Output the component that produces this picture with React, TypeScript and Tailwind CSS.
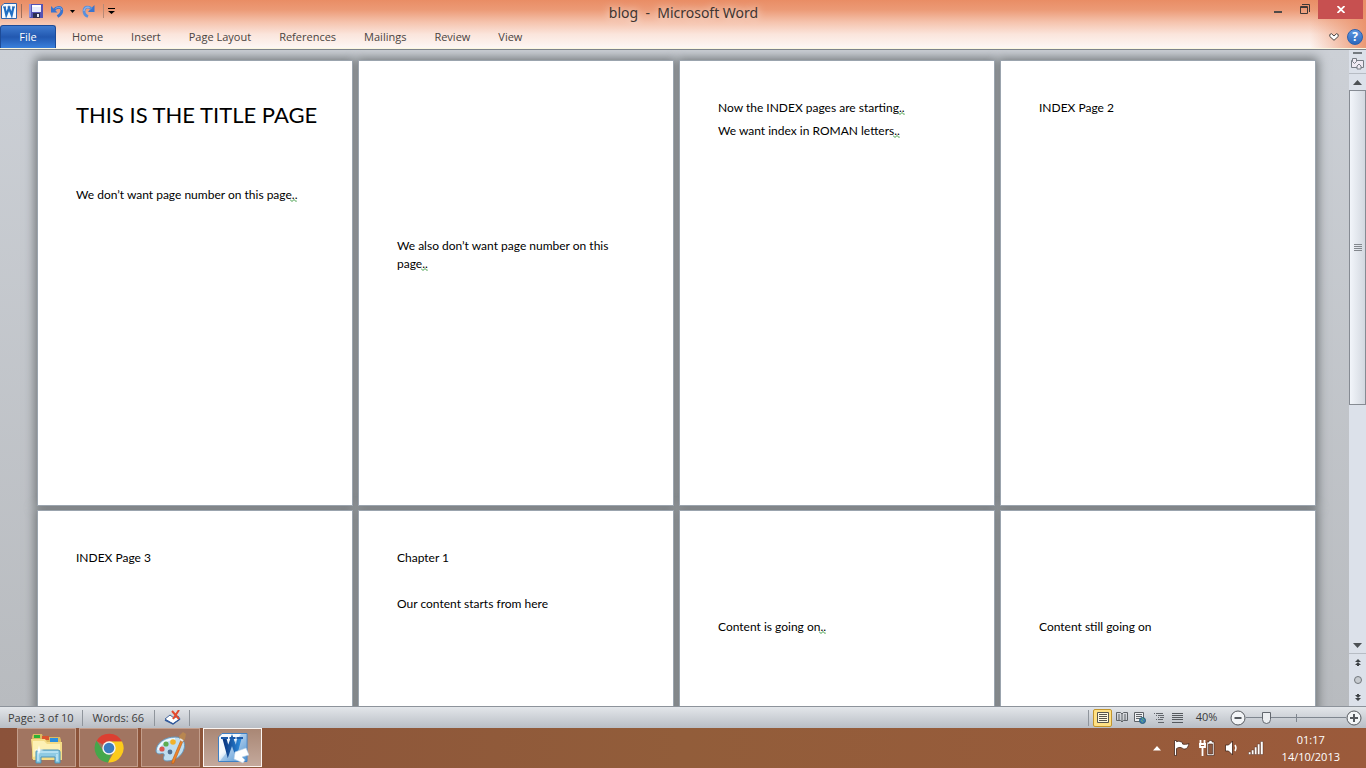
import React from "react";

const tabs = ["Home", "Insert", "Page Layout", "References", "Mailings", "Review", "View"];

type Line = { text: string; gap: string; wavy?: boolean; title?: boolean };

// Thumbnails of the document, four to a row
const pages: Line[][] = [
  [
    { text: "THIS IS THE TITLE PAGE", gap: "mt-[38px]", title: true },
    { text: "We don’t want page number on this page..", gap: "mt-[55px]", wavy: true },
  ],
  [{ text: "We also don’t want page number on this page..", gap: "mt-[176px]", wavy: true }],
  [
    { text: "Now the INDEX pages are starting..", gap: "mt-[38px]", wavy: true },
    { text: "We want index in ROMAN letters..", gap: "mt-[5px]", wavy: true },
  ],
  [{ text: "INDEX Page 2", gap: "mt-[38px]" }],
  [{ text: "INDEX Page 3", gap: "mt-[38px]" }],
  [
    { text: "Chapter 1", gap: "mt-[38px]" },
    { text: "Our content starts from here", gap: "mt-[28px]" },
  ],
  [{ text: "Content is going on..", gap: "mt-[107px]", wavy: true }],
  [{ text: "Content still going on", gap: "mt-[107px]" }],
];

function WordBadge() {
  return (
    <svg width="16" height="16" viewBox="0 0 16 16" aria-hidden="true">
      <path d="M3 .5h12.500v15H.5V3z" fill="#f4f9fe" stroke="#2d64ad" />
      <path d="M3.500 4l1.800 8L8 5l2.700 7 1.800-8" fill="none" stroke="#1f6fc4" strokeWidth="2.200" />
      <path d="M2 4h3M6.500 4h3M11 4h3" stroke="#1a5cab" />
    </svg>
  );
}

function SaveIcon() {
  return (
    <svg width="14" height="14" viewBox="0 0 14 14" aria-hidden="true">
      <path d="M0 0h14v14H1l-1-1z" fill="#5453b4" />
      <path d="M0 0h2v13H0z" fill="#8c91dc" />
      <path d="M3 1h9v7H3z" fill="#e9edfb" />
      <path d="M3 1h9v2H3z" fill="#fff" />
      <path d="M4 9h7v5H4z" fill="#2d2f52" />
      <path d="M8 10h2v3H8z" fill="#e5e7f1" />
    </svg>
  );
}

function UndoIcon() {
  return (
    <svg width="13" height="13" viewBox="0 0 13 13" aria-hidden="true">
      <path d="M0 1v6.500h6.500L4.500 5.500z" fill="#3a74cf" />
      <path d="M3 5C5 2 10.800.8 10.800 5.500c0 2.500-1.800 4.500-4.300 6" fill="none" stroke="#3a74cf" strokeWidth="2.800" />
      <path d="M4.500 3.500C7 1.800 10.500 1.800 10.800 5" fill="none" stroke="#86aee9" />
    </svg>
  );
}

function RedoIcon() {
  return (
    <svg width="13" height="13" viewBox="0 0 13 13" aria-hidden="true">
      <path d="M12.500 0v7H6l2-2.500z" fill="#3a74cf" />
      <path d="M9.500 4C7 1 2 1.500 2 6c0 2.500 1.300 4.500 4 5.500" fill="none" stroke="#5a90dc" strokeWidth="2.800" />
      <path d="M7.500 2.500C4.500 1.500 2 3 2 6" fill="none" stroke="#a5c4ef" />
    </svg>
  );
}

function FolderIcon() {
  return (
    <svg width="34" height="32" viewBox="0 0 34 32" aria-hidden="true">
      <path d="M2 5l1-3h9l1 3h17l1 3v19H2z" fill="#d9ba62" />
      <path d="M4 3h6v3H4z" fill="#2db335" />
      <path d="M12 4h7v4h-7z" fill="#d8552f" />
      <path d="M20 6h8v4h-8z" fill="#2c8fdc" />
      <path d="M1 7h14l2 3h15v18H3z" fill="#f5dc87" />
      <path d="M3 9h11l3 3h13v6L3 25z" fill="#fdf0b4" />
      <path d="M6 31V20q0-2 2-2h20q2 0 2 2v11h-5v-6H11v6z" fill="#8ecae3" stroke="#4a93b7" />
      <path d="M8 20h20M8 20v9M27 22v7" stroke="#d9f5ff" fill="none" />
      <path d="M9 13l.8 4.200 4.200.8-4.200.8L9 23l-.8-4.200L4 18l4.200-.8z" fill="#fff" />
    </svg>
  );
}

function ChromeIcon() {
  return (
    <svg width="30" height="30" viewBox="0 0 30 30" aria-hidden="true">
      <path d="M15 15L2.500 8A14.500 14.500 0 0 1 28 8.500H15z" fill="#dc3f31" />
      <path d="M15 8.500h13A14.500 14.500 0 0 1 14 29.500l6.500-11.200z" fill="#fccb1b" />
      <path d="M2.500 7.800l7 10.500q2 3.500 7.500 3l-3 8.200A14.500 14.500 0 0 1 2.500 7.800z" fill="#45a74a" />
      <circle cx="15" cy="15" r="6.700" fill="#f6f6f2" />
      <circle cx="15" cy="15" r="5.300" fill="#3b7cbf" />
    </svg>
  );
}

function PaintIcon() {
  return (
    <svg width="32" height="32" viewBox="0 0 32 32" aria-hidden="true">
      <path d="M1 19C1 11 10 5 20 5c8 0 11 6 9 12-2 7-9 12-17 12-4 0-4-3-3-5 1-3-2-3-4-2-2 0-4-1-4-3z" fill="#bfdef0" stroke="#6795b8" />
      <path d="M3 18C5 11 12 7 20 7" stroke="#edf9ff" fill="none" strokeWidth="2" />
      <circle cx="7" cy="17" r="2.600" fill="#db5750" />
      <circle cx="11" cy="12" r="2.600" fill="#5cad52" />
      <circle cx="18" cy="10" r="2.800" fill="#f2b229" />
      <circle cx="15" cy="20" r="2.400" fill="#4f6e91" />
      <path d="M26 8l2 1-9 22-2 1v-3z" fill="#ef8429" stroke="#b45d19" strokeWidth=".6" />
      <path d="M24 4l4-4 3 2-1 5-3 3-2-2z" fill="#b88650" />
      <path d="M25 7l3 2" stroke="#e8e8e8" strokeWidth="2" />
    </svg>
  );
}

function WordIcon() {
  return (
    <svg width="32" height="32" viewBox="0 0 32 32" aria-hidden="true">
      <defs>
        <linearGradient id="sheet" x1="0" y1="0" x2="1" y2="1">
          <stop offset="0.400" stopColor="#f5f9fd" />
          <stop offset="1" stopColor="#4f97d6" />
        </linearGradient>
        <linearGradient id="letter" x1="0" y1="0" x2="1" y2="0">
          <stop offset="0" stopColor="#0b3a85" />
          <stop offset="1" stopColor="#2a85d6" />
        </linearGradient>
      </defs>
      <path d="M5 1.500h25v28H1.500V5z" fill="url(#sheet)" stroke="#3e80c4" />
      <path d="M24 2h5.500v27H3z" fill="#3f86cd" opacity=".35" />
      <path d="M7.500 6.500L11 19.500 15 8l4 11.500L22.500 6.500" fill="none" stroke="url(#letter)" strokeWidth="4" />
      <path d="M4 6h7M12.500 6h6M19.500 6H26" stroke="#1a5aab" strokeWidth="2" />
      <path d="M18 20l11-4 3 7-7 2 3 3-2 3-9-4z" fill="#fff" stroke="#b6cde4" strokeWidth=".6" />
    </svg>
  );
}

const tasks = [
  { name: "File Explorer", icon: <FolderIcon /> },
  { name: "Google Chrome", icon: <ChromeIcon /> },
  { name: "Paint", icon: <PaintIcon /> },
  { name: "blog - Microsoft Word", icon: <WordIcon />, active: true },
];

function TitleBar() {
  return (
    <div className="flex h-[25px] items-start justify-between">
      <div className="flex flex-1 items-center gap-1 pl-[1px] pt-[3px]">
        <WordBadge />
        <span className="h-[14px] w-px bg-[#a06f5a]" />
        <button aria-label="Save" className="ml-[3px]"><SaveIcon /></button>
        <button aria-label="Undo" className="ml-1"><UndoIcon /></button>
        <button aria-label="Undo history" className="ml-[2px]">
          <svg width="5" height="3" viewBox="0 0 5 3"><path d="M0 0h5L2.500 3z" /></svg>
        </button>
        <button aria-label="Redo" className="ml-[3px]"><RedoIcon /></button>
        <span className="ml-1 h-[14px] w-px bg-[#b88a76]" />
        <button aria-label="Customize toolbar">
          <svg width="7" height="6" viewBox="0 0 7 6"><path d="M0 0h7v1H0zM0 3h7L3.500 6z" /></svg>
        </button>
      </div>
      <h1 className="whitespace-pre pt-[3px] font-['Noto_Sans',sans-serif] text-[14px] leading-5 text-[#3f3531] [text-shadow:0_0_8px_#fff]">
        blog  -  Microsoft Word
      </h1>
      <div className="flex flex-1 justify-end">
        <button aria-label="Minimize" className="flex h-[19px] w-[26px] justify-center pt-[11px]">
          <span className="h-[2px] w-2 bg-[#4f4a48]" />
        </button>
        <button aria-label="Restore" className="flex h-[19px] w-[27px] justify-center pt-1">
          <svg width="10" height="10" viewBox="0 0 10 10" fill="none" stroke="#3e3836">
            <path d="M.5 2.500h7v7h-7zM.5 3.500h7M2 .5h7.500V8" />
          </svg>
        </button>
        <button aria-label="Close" className="mr-[3px] flex h-[19px] w-[45px] items-center justify-center bg-[#c75050]">
          <svg width="8" height="7" viewBox="0 0 8 7" stroke="#fff" strokeWidth="1.800"><path d="M.5 0l7 7M7.500 0l-7 7" /></svg>
        </button>
      </div>
    </div>
  );
}

function Ribbon() {
  return (
    <nav className="flex h-[23px] items-stretch justify-between">
      <div className="flex">
        <button className="w-14 rounded-t-[3px] border border-b-0 border-[#1d4b97] bg-linear-to-b from-[#3f7bd0] via-[#2258b0] to-[#3a80dc] text-[11px] text-white">
          File
        </button>
        <div className="flex pl-[2px]">
          {tabs.map((tab) => (
            <button key={tab} className="px-[14px] pt-[2px] text-[11px] text-[#4a4441]">{tab}</button>
          ))}
        </div>
      </div>
      <div className="flex items-center gap-2 pr-[3px]">
        <button aria-label="Expand the ribbon">
          <svg width="10" height="8" viewBox="0 0 10 8" fill="#fff" stroke="#4b4542">
            <path d="M.8 1.500L2.500.7 5 3 7.500.7l1.700.8v2L5 7.300.8 3.500z" />
          </svg>
        </button>
        <button aria-label="Help" className="h-4 w-4 rounded-full border border-[#2a5fae] bg-linear-to-b from-[#5d97e2] to-[#2c68bd] text-[12px] font-bold leading-[14px] text-white">
          ?
        </button>
      </div>
    </nav>
  );
}

// The grammar checker's mark, hung under the two characters before it
function Squiggle() {
  return (
    <span className="relative">
      <svg width="7" height="3" viewBox="0 0 7 3" className="absolute bottom-0 right-0" fill="none" stroke="#3f9b45" aria-hidden="true">
        <path d="M0 .5l2 2 2-2 2 2 1-1" />
      </svg>
    </span>
  );
}

function Page({ lines }: { lines: Line[] }) {
  return (
    <article className="relative flex aspect-[314/444] flex-col bg-white px-[38px] outline outline-[#9ba4ae] before:absolute before:inset-0 before:-z-10 before:shadow-[0_0_10px_3px_#6f7477]">
      {lines.map((line) =>
        line.title ? (
          <h2 key={line.text} className={`${line.gap} whitespace-nowrap text-[22px] leading-8`}>{line.text}</h2>
        ) : (
          <p key={line.text} className={`${line.gap} text-[12px] leading-[18px]`}>
            {line.text}
            {line.wavy && <Squiggle />}
          </p>
        )
      )}
    </article>
  );
}

function ScrollBar() {
  return (
    <aside className="flex w-[17px] flex-col items-center bg-[#dce1ea]">
      <button aria-label="Split" className="mt-[2px] h-[2px] w-[9px] bg-[#747a80]" />
      <button aria-label="Ruler" className="mt-1">
        <svg width="13" height="12" viewBox="0 0 13 12" fill="#eee9f2" stroke="#767c84">
          <path d="M.5 2.500h12v7H.5z" />
          <path d="M1.500.5h4v3l-2 2-2-2zM6 8l2-2 2 2v3H6z" />
        </svg>
      </button>
      <button aria-label="Scroll up" className="mt-[3px] flex h-[17px] w-full items-center justify-center border-t border-[#b7bcc4]">
        <svg width="9" height="5" viewBox="0 0 9 5" fill="#4c5054"><path d="M4.500 0L9 5H0z" /></svg>
      </button>
      <div className="flex w-full flex-1 flex-col">
        <div className="flex basis-[57.500%] flex-col items-center justify-center gap-px border border-[#868b93] bg-linear-to-r from-[#f2f5fa] to-[#d3d8e0]">
          <span className="h-px w-2 bg-[#83878d]" />
          <span className="h-px w-2 bg-[#83878d]" />
          <span className="h-px w-2 bg-[#83878d]" />
          <span className="h-px w-2 bg-[#83878d]" />
        </div>
      </div>
      <button aria-label="Scroll down" className="flex h-4 w-full items-center justify-center border-b border-[#b7bcc4]">
        <svg width="9" height="5" viewBox="0 0 9 5" fill="#4c5054"><path d="M0 0h9L4.500 5z" /></svg>
      </button>
      <div className="flex h-[52px] flex-col items-center justify-around">
        <button aria-label="Previous page">
          <svg width="6" height="7" viewBox="0 0 6 7" fill="#3f4347"><path d="M3 0l3 3H0zM3 3l3 3H4v1H2V6H0z" /></svg>
        </button>
        <button aria-label="Browse object" className="h-2 w-2 rounded-full border border-[#73787d] bg-[#c7cbd0]" />
        <button aria-label="Next page">
          <svg width="6" height="7" viewBox="0 0 6 7" fill="#3f4347"><path d="M3 7l3-3H0zM3 4l3-3H4V0H2v1H0z" /></svg>
        </button>
      </div>
    </aside>
  );
}

function StatusBar() {
  return (
    <footer className="flex h-[22px] items-center justify-between border-t border-[#8d939b] bg-linear-to-b from-[#e3e6ea] to-[#b9bec5] text-[11px] text-[#3c3c3c]">
      <div className="flex h-full items-center">
        <button className="h-4 border-r border-[#8f959c] px-2 leading-4">Page: 3 of 10</button>
        <button className="h-4 border-r border-[#8f959c] px-[10px] leading-4">Words: 66</button>
        <button aria-label="Proofing errors" className="flex h-4 w-[35px] items-center justify-center border-r border-[#8f959c]">
          <svg width="17" height="15" viewBox="0 0 17 15">
            <path d="M1 9l5-4 4 3 4-2 2 3-7 5z" fill="#fff" stroke="#44679f" />
            <path d="M1 10l8 4 7-5" fill="none" stroke="#345c9d" strokeWidth="1.500" />
            <path d="M8 1l7 8M15 0L9 9" stroke="#e2492e" strokeWidth="2" />
          </svg>
        </button>
      </div>
      <div className="flex h-full items-center pr-1">
        <div className="mr-1 h-4 w-px bg-[#8f959c]" />
        <button aria-label="Print layout" className="flex h-[18px] w-[19px] items-center justify-center rounded-[2px] border border-[#c2952d] bg-[#ffe184]">
          <svg width="12" height="11" viewBox="0 0 12 11" fill="none" stroke="#58564d"><path d="M.5.5h11v10H.5z" fill="#fff9df" /><path d="M2 2.500h8M2 4.500h8M2 6.500h8M2 8.500h8" /></svg>
        </button>
        <button aria-label="Full screen reading" className="ml-1">
          <svg width="12" height="11" viewBox="0 0 12 11" fill="none" stroke="#5e6267"><path d="M.5.500h4L6 2l1.500-1.500h4v8h-4L6 10 4.500 8.500h-4zM6 2v8M2 3h2M2 5h2M2 7h2M8 3h2M8 5h2M8 7h2" /></svg>
        </button>
        <button aria-label="Web layout" className="ml-[6px]">
          <svg width="12" height="12" viewBox="0 0 12 12" fill="none" stroke="#5e6267"><path d="M.5.500h9v9h-9z" fill="#eef0f2" /><path d="M2 2.500h6M2 4.500h6M2 6.500h4" /><circle cx="8.500" cy="8.500" r="3" fill="#3f7bb4" stroke="#2c6077" /><path d="M7 8l2 2M8 6l2 2" stroke="#62b070" /></svg>
        </button>
        <button aria-label="Outline" className="ml-2">
          <svg width="10" height="10" viewBox="0 0 10 10" stroke="#62666b"><path d="M0 .5h1M2 .5h7M2 2.500h1M4 2.500h6M4 4.500h1M6 4.500h4M2 6.500h1M4 6.500h5M4 9.500h6" /></svg>
        </button>
        <button aria-label="Draft" className="ml-2">
          <svg width="11" height="10" viewBox="0 0 11 10" stroke="#55595e"><path d="M0 .5h11M0 2.500h11M0 4.500h11M0 6.500h11M0 9.500h11" /></svg>
        </button>
        <button className="ml-3 w-[23px] text-[11px]">40%</button>
        <button aria-label="Zoom out" className="ml-3">
          <svg width="16" height="16" viewBox="0 0 16 16" stroke="#55595e"><circle cx="8" cy="8" r="7" fill="#f3f5f7" /><path d="M4.500 8h7" strokeWidth="2" /></svg>
        </button>
        <div className="relative flex w-[100px] items-center">
          <span className="absolute left-0 h-px w-full bg-[#7f868f]" />
          <span className="absolute left-1/2 h-2 w-px bg-[#7f868f]" />
          <input
            type="range"
            aria-label="Zoom"
            min={0}
            max={100}
            defaultValue={18}
            className="relative h-4 w-full appearance-none bg-transparent [&::-webkit-slider-thumb]:h-3 [&::-webkit-slider-thumb]:w-[9px] [&::-webkit-slider-thumb]:appearance-none [&::-webkit-slider-thumb]:rounded-b-full [&::-webkit-slider-thumb]:border [&::-webkit-slider-thumb]:border-[#62676e] [&::-webkit-slider-thumb]:bg-[#eceef1]"
          />
        </div>
        <button aria-label="Zoom in">
          <svg width="16" height="16" viewBox="0 0 16 16" stroke="#55595e"><circle cx="8" cy="8" r="7" fill="#f3f5f7" /><path d="M4 8h8M8 4v8" strokeWidth="2" /></svg>
        </button>
      </div>
    </footer>
  );
}

function TaskBar() {
  return (
    <div className="flex h-10 items-stretch justify-between bg-linear-to-r from-[#8b523a] via-[#925d3a] to-[#9b5a3b]">
      <div className="flex gap-[3px] pl-[17px]">
        {tasks.map((task) => (
          <button
            key={task.name}
            aria-label={task.name}
            className={
              task.active
                ? "flex h-[39px] w-[59px] items-center justify-center border border-[#fbf4f0] bg-linear-to-b from-[#a98775] to-[#c4a99c]"
                : "flex h-[39px] w-[59px] items-center justify-center border border-[#c39e8c] bg-[#a17561]"
            }
          >
            {task.icon}
          </button>
        ))}
      </div>
      <div className="flex items-center pr-[26px] text-white">
        <button aria-label="Show hidden icons" className="mr-[13px]">
          <svg width="8" height="5" viewBox="0 0 8 5" fill="#fff"><path d="M4 0l4 4.500H0z" /></svg>
        </button>
        <button aria-label="Action Center" className="mr-[9px]">
          <svg width="16" height="16" viewBox="0 0 16 16" fill="#fff" stroke="#43261b" strokeWidth=".8"><path d="M.5.500h2v1.200c3-1 4 0 6 .9v1.400c2 .6 4 .4 6.500-.5-.8 3-1.500 5-4 5.600-2 .2-3-1.700-5-1.700-1.500 0-2.500.5-3.500 1.200v7h-2z" /></svg>
        </button>
        <button aria-label="Battery" className="mr-[10px]">
          <svg width="16" height="16" viewBox="0 0 16 16"><path d="M8 2h2V.500h3V2h2v13.500H8z" fill="#fff" stroke="#43261b" strokeWidth=".6" /><path d="M9.500 4h4v10h-4z" fill="#8e5940" stroke="#43261b" strokeWidth=".6" /><path d="M1.500 0v3M5.500 0v3M0 4h7M1 4v3h5V4M3.500 7v9" stroke="#fff" strokeWidth="1.800" fill="none" /></svg>
        </button>
        <button aria-label="Volume" className="mr-[10px]">
          <svg width="13" height="16" viewBox="0 0 13 16" fill="#fff" stroke="#43261b" strokeWidth=".8"><path d="M.5 5h3L7.500 1v14l-4-4h-3z" /><path d="M10 5q2 3 0 6" fill="none" stroke="#fff" strokeWidth="1.400" /></svg>
        </button>
        <button aria-label="Network">
          <svg width="16" height="14" viewBox="0 0 16 14" fill="#fff" stroke="#43261b" strokeWidth=".4"><path d="M.5 11h2.300v2.500H.5zM3.500 9h2.300v4.500H3.500zM6.500 6h2.300v7.500H6.500zM9.500 3h2.300v10.500H9.500zM12.500.5h2.500v13h-2.500z" /></svg>
        </button>
        <time dateTime="2013-10-14T01:17" className="ml-[18px] text-center text-[11px] leading-[17px]">
          <span className="block">01:17</span>
          <span className="block">14/10/2013</span>
        </time>
      </div>
    </div>
  );
}

export default function App() {
  return (
    <div className="flex h-screen flex-col overflow-hidden font-['Open_Sans',sans-serif]">
      <header className="border-b border-[#7d838b] bg-[linear-gradient(to_right,rgba(233,142,102,0)_calc(100%_-_56px),rgba(233,142,102,0.9)),linear-gradient(#e98d65,#ec9a76_20%,#f5c3ad_45%,#fbe5dc_70%,#fdf8f6)]">
        <TitleBar />
        <Ribbon />
        <div className="h-px bg-[#fbf7df]" />
      </header>
      <main className="flex min-h-0 flex-1">
        <div className="isolate flex-1 overflow-hidden bg-linear-to-b from-[#ccd0d6] to-[#b8bbbf] pl-[38px] pr-[34px] pt-[11px] font-[Lato,sans-serif]">
          <div className="grid grid-cols-4 gap-x-[7px] gap-y-[6px]">
            {pages.map((lines, i) => (
              <Page key={i} lines={lines} />
            ))}
          </div>
        </div>
        <ScrollBar />
      </main>
      <StatusBar />
      <TaskBar />
    </div>
  );
}
